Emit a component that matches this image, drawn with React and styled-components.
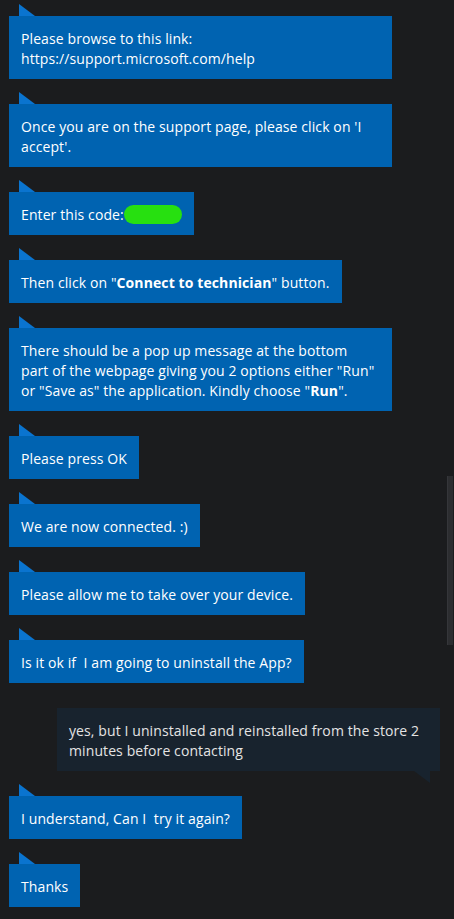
import React from 'react';
import styled, { createGlobalStyle } from 'styled-components';

const GlobalStyle = createGlobalStyle`
  html, body {
    margin: 0;
    padding: 0;
    background: #1b1c1e;
  }
  body {
    font-family: "Open Sans", "Noto Sans", sans-serif;
  }
`;

const messages = [
  { from: 'agent', text: <>Please browse to this link: https://support.microsoft.com/help</> },
  { from: 'agent', text: <>Once you are on the support page, please click on 'I accept'.</> },
  { from: 'agent', text: <>Enter this code:<Code /></> },
  { from: 'agent', text: <>Then click on "<b>Connect to technician</b>" button.</> },
  {
    from: 'agent',
    full: true,
    text: (
      <>
        There should be a pop up message at the bottom
        <br />
        part of the webpage giving you 2 options either "Run" or "Save as" the application.
        Kindly choose "<b>Run</b>".
      </>
    ),
  },
  { from: 'agent', text: <>Please press OK</> },
  { from: 'agent', text: <>We are now connected. :)</> },
  { from: 'agent', text: <>Please allow me to take over your device.</> },
  { from: 'agent', text: <>Is it ok if &nbsp;I am going to uninstall the App?</> },
  { from: 'user', text: <>yes, but I uninstalled and reinstalled from the store 2 minutes before contacting</> },
  { from: 'agent', text: <>I understand, Can I &nbsp;try it again?</> },
  { from: 'agent', text: <>Thanks</> },
];

function Code() {
  return <CodePill />;
}

export default function App() {
  return (
    <>
      <GlobalStyle />
      <Page>
        <Thread>
          {messages.map((m, i) => (
            <Message key={i} $from={m.from}>
              <Bubble $from={m.from} $full={m.full}>{m.text}</Bubble>
            </Message>
          ))}
        </Thread>
        <ScrollThumb />
      </Page>
    </>
  );
}

const Page = styled.div`
  position: relative;
  width: 454px;
  height: 919px;
  overflow: hidden;
  background: #1b1c1e;
`;

const Thread = styled.div`
  display: flex;
  flex-direction: column;
  gap: 13px;
  padding: 4px 14px 0 9px;
`;

const Message = styled.div`
  display: flex;
  justify-content: ${p => (p.$from === 'user' ? 'flex-end' : 'flex-start')};
  padding-top: 12px;
`;

const Bubble = styled.div`
  position: relative;
  box-sizing: border-box;
  max-width: 383px;
  ${p => p.$full && 'width: 383px;'}
  padding: 13px 12px 10px;
  font-size: 14px;
  line-height: 20px;
  letter-spacing: 0.1px;
  color: ${p => (p.$from === 'user' ? '#e4e4e4' : '#ffffff')};
  background: ${p => (p.$from === 'user' ? '#18232e' : '#0063b1')};

  b {
    font-weight: 700;
  }

  &::before {
    content: '';
    position: absolute;
    width: 16px;
    height: 12px;
    ${p =>
      p.$from === 'user'
        ? `
      right: 10px;
      top: 100%;
      background: #18232e;
      clip-path: polygon(0 0, 100% 0, 100% 100%);
    `
        : `
      left: 10px;
      bottom: 100%;
      background: #0a74cf;
      clip-path: polygon(0 0, 100% 100%, 0 100%);
    `}
  }
`;

const CodePill = styled.span`
  display: inline-block;
  width: 58px;
  height: 19px;
  border-radius: 10px;
  background: #27e010;
  vertical-align: -4px;
`;

const ScrollThumb = styled.div`
  position: absolute;
  right: 1px;
  top: 476px;
  width: 5px;
  height: 169px;
  background: #2c2d30;
  border-left: 1px solid #35363a;
`;
